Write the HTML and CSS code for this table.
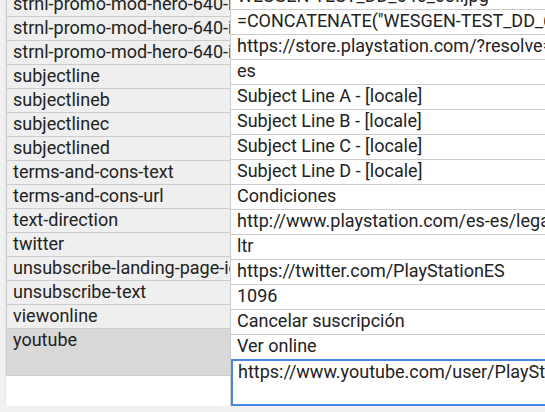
FILE: index.html
```html
<!DOCTYPE html>
<html>
<head>
<meta charset="utf-8">
<link rel="stylesheet" href="styles.css">
</head>
<body>
<div class="sheet">
  <div class="keys">
    <div class="key">strnl-promo-mod-hero-640-img</div>
    <div class="key">strnl-promo-mod-hero-640-img-alt</div>
    <div class="key">strnl-promo-mod-hero-640-img-url</div>
    <div class="key">subjectline</div>
    <div class="key">subjectlineb</div>
    <div class="key">subjectlinec</div>
    <div class="key">subjectlined</div>
    <div class="key">terms-and-cons-text</div>
    <div class="key">terms-and-cons-url</div>
    <div class="key">text-direction</div>
    <div class="key">twitter</div>
    <div class="key">unsubscribe-landing-page-id</div>
    <div class="key">unsubscribe-text</div>
    <div class="key">viewonline</div>
    <div class="key key-tall">youtube</div>
  </div>
  <div class="values">
    <div class="val">WESGEN-TEST_DD_640_03l.jpg</div>
    <div class="val">=CONCATENATE("WESGEN-TEST_DD_640_03l.jpg")</div>
    <div class="val">https://store.playstation.com/?resolve=EP0001</div>
    <div class="val">es</div>
    <div class="val">Subject Line A - [locale]</div>
    <div class="val">Subject Line B - [locale]</div>
    <div class="val">Subject Line C - [locale]</div>
    <div class="val">Subject Line D - [locale]</div>
    <div class="val">Condiciones</div>
    <div class="val">http://www.playstation.com/es-es/legal/</div>
    <div class="val">ltr</div>
    <div class="val">https://twitter.com/PlayStationES</div>
    <div class="val">1096</div>
    <div class="val">Cancelar suscripción</div>
    <div class="val">Ver online</div>
    <div class="val val-active">https://www.youtube.com/user/PlayStationES</div>
  </div>
</div>
</body>
</html>
```

FILE: styles.css
```css
html, body {
  margin: 0;
  padding: 0;
}

body {
  background: #f1f1f1;
  font-family: Roboto, "Noto Sans", sans-serif;
  font-size: 18px;
  color: #222222;
}

.sheet {
  margin-left: 6px;
  height: 406px;
  background: #ffffff;
  display: flex;
  align-items: flex-start;
  overflow: hidden;
  box-shadow: 0 1px 2px rgba(0, 0, 0, 0.12);
}

.keys {
  width: 224px;
  flex: none;
  margin-top: -7px;
  border-left: 1px solid #cccccc;
  box-sizing: border-box;
}

.key {
  height: 24px;
  box-sizing: border-box;
  border-bottom: 1px solid #cccccc;
  background: #efefef;
  padding: 0 6px;
  line-height: 21px;
  white-space: nowrap;
  overflow: hidden;
}

.key-tall {
  height: 47px;
  background: #d9d9d9;
}

.values {
  flex: none;
  width: 600px;
  margin-top: -15px;
  border-left: 1px solid #cccccc;
}

.val {
  height: 25px;
  box-sizing: border-box;
  border-bottom: 1px solid #cccccc;
  padding: 0 6px;
  line-height: 21px;
  white-space: nowrap;
  overflow: hidden;
}

.val-active {
  height: 47px;
  margin-top: -1px;
  border: 2px solid #4a86e8;
  padding: 0 5px;
}
```
